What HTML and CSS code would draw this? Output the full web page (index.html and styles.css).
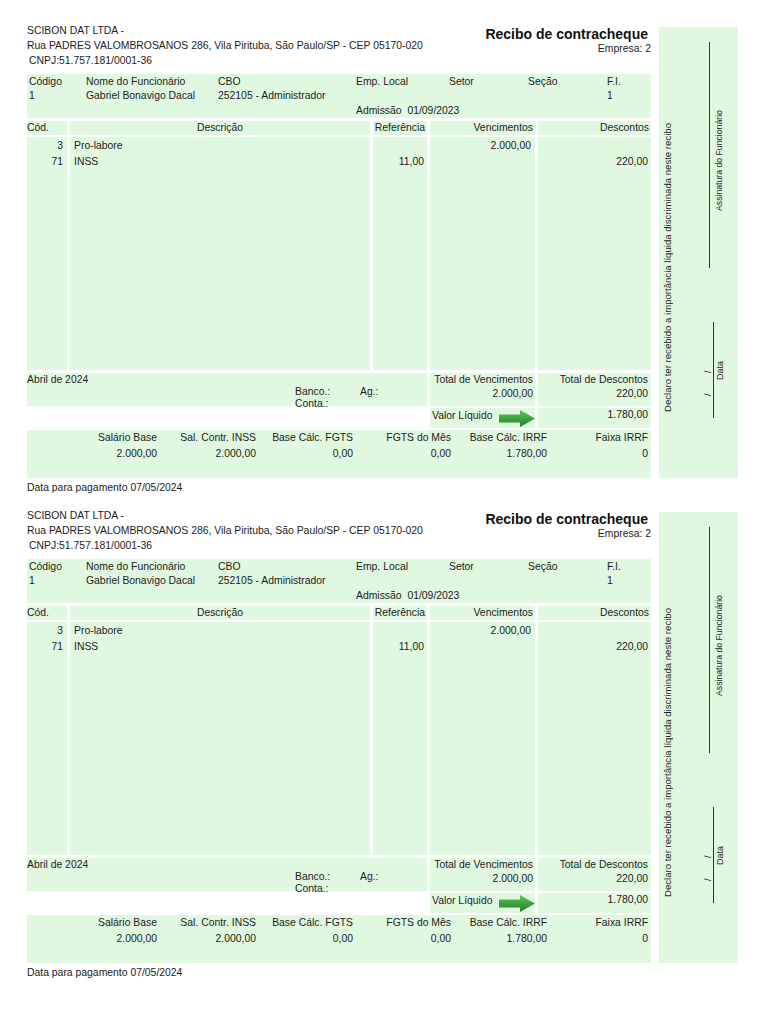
FILE: index.html
```html
<!DOCTYPE html>
<html lang="pt-BR">
<head>
<meta charset="utf-8">
<title>Recibo de contracheque</title>
<link rel="stylesheet" href="styles.css">
</head>
<body>
<div class="page">

  <section class="receipt">
    <div class="receipt-row">
      <div class="main">
        <div class="top">
          <div class="company">
            <div>SCIBON DAT LTDA -</div>
            <div>Rua PADRES VALOMBROSANOS 286, Vila Pirituba, São Paulo/SP - CEP 05170-020</div>
            <div class="cnpj">CNPJ:51.757.181/0001-36</div>
          </div>
          <div class="title-box">
            <div class="title">Recibo de contracheque</div>
            <div class="empresa">Empresa: 2</div>
          </div>
        </div>
        <div class="emp">
          <div class="emp-row">
            <span>Código</span><span>Nome do Funcionário</span><span>CBO</span><span>Emp. Local</span><span>Setor</span><span>Seção</span><span>F.I.</span>
          </div>
          <div class="emp-row">
            <span>1</span><span>Gabriel Bonavigo Dacal</span><span>252105 - Administrador</span><span></span><span></span><span></span><span>1</span>
          </div>
          <div class="emp-row adm">
            <span class="adm-cell">Admissão&nbsp;&nbsp;01/09/2023</span>
          </div>
        </div>
        <div class="items">
          <div class="th th-cod">Cód.</div>
          <div class="th th-desc">Descrição</div>
          <div class="th th-r">Referência</div>
          <div class="th th-r">Vencimentos</div>
          <div class="th th-r">Descontos</div>
          <div class="td td-cod"><div>3</div><div>71</div></div>
          <div class="td td-desc"><div>Pro-labore</div><div>INSS</div></div>
          <div class="td td-r"><div>&nbsp;</div><div>11,00</div></div>
          <div class="td td-venc"><div>2.000,00</div><div>&nbsp;</div></div>
          <div class="td td-r"><div>&nbsp;</div><div>220,00</div></div>
        </div>
        <div class="foot">
          <div class="f-left">
            <div>Abril de 2024</div>
            <div class="bank">
              <div><span class="bk">Banco.:</span><span>Ag.:</span></div>
              <div><span class="bk">Conta.:</span></div>
            </div>
          </div>
          <div class="f-tot f-venc"><div>Total de Vencimentos</div><div>2.000,00</div></div>
          <div class="f-tot f-desc"><div>Total de Descontos</div><div>220,00</div></div>
          <div class="f-blank"></div>
          <div class="f-liq">
            <span>Valor Líquido</span>
            <svg class="arrow" width="36" height="17" viewBox="0 0 36 17" aria-hidden="true">
              <defs>
                <linearGradient id="ag1" x1="0" y1="0" x2="0" y2="1">
                  <stop offset="0" stop-color="#62c454"/>
                  <stop offset="1" stop-color="#1f7f2b"/>
                </linearGradient>
              </defs>
              <path d="M0 4.5H21V0L36 8.5L21 17V12.5H0Z" fill="url(#ag1)"/>
            </svg>
          </div>
          <div class="f-liq-val">1.780,00</div>
        </div>
        <div class="bottom">
          <div class="b-row">
            <span>Salário Base</span><span>Sal. Contr. INSS</span><span>Base Cálc. FGTS</span><span>FGTS do Mês</span><span>Base Cálc. IRRF</span><span>Faixa IRRF</span>
          </div>
          <div class="b-row b-vals">
            <span>2.000,00</span><span>2.000,00</span><span>0,00</span><span>0,00</span><span>1.780,00</span><span>0</span>
          </div>
        </div>
      </div>
      <aside class="panel">
        <div class="decl-col">
          <div class="vt decl">Declaro ter recebido a importância líquida discriminada neste recibo</div>
        </div>
        <div class="sign-col">
          <div class="vt sig">Assinatura do Funcionário</div>
          <div class="vt date">
            <div class="date-line"><span class="sl s1">/</span><span class="sl s2">/</span></div>
            <div class="date-label">Data</div>
          </div>
        </div>
      </aside>
    </div>
    <div class="paydate">Data para pagamento 07/05/2024</div>
  </section>

  <section class="receipt">
    <div class="receipt-row">
      <div class="main">
        <div class="top">
          <div class="company">
            <div>SCIBON DAT LTDA -</div>
            <div>Rua PADRES VALOMBROSANOS 286, Vila Pirituba, São Paulo/SP - CEP 05170-020</div>
            <div class="cnpj">CNPJ:51.757.181/0001-36</div>
          </div>
          <div class="title-box">
            <div class="title">Recibo de contracheque</div>
            <div class="empresa">Empresa: 2</div>
          </div>
        </div>
        <div class="emp">
          <div class="emp-row">
            <span>Código</span><span>Nome do Funcionário</span><span>CBO</span><span>Emp. Local</span><span>Setor</span><span>Seção</span><span>F.I.</span>
          </div>
          <div class="emp-row">
            <span>1</span><span>Gabriel Bonavigo Dacal</span><span>252105 - Administrador</span><span></span><span></span><span></span><span>1</span>
          </div>
          <div class="emp-row adm">
            <span class="adm-cell">Admissão&nbsp;&nbsp;01/09/2023</span>
          </div>
        </div>
        <div class="items">
          <div class="th th-cod">Cód.</div>
          <div class="th th-desc">Descrição</div>
          <div class="th th-r">Referência</div>
          <div class="th th-r">Vencimentos</div>
          <div class="th th-r">Descontos</div>
          <div class="td td-cod"><div>3</div><div>71</div></div>
          <div class="td td-desc"><div>Pro-labore</div><div>INSS</div></div>
          <div class="td td-r"><div>&nbsp;</div><div>11,00</div></div>
          <div class="td td-venc"><div>2.000,00</div><div>&nbsp;</div></div>
          <div class="td td-r"><div>&nbsp;</div><div>220,00</div></div>
        </div>
        <div class="foot">
          <div class="f-left">
            <div>Abril de 2024</div>
            <div class="bank">
              <div><span class="bk">Banco.:</span><span>Ag.:</span></div>
              <div><span class="bk">Conta.:</span></div>
            </div>
          </div>
          <div class="f-tot f-venc"><div>Total de Vencimentos</div><div>2.000,00</div></div>
          <div class="f-tot f-desc"><div>Total de Descontos</div><div>220,00</div></div>
          <div class="f-blank"></div>
          <div class="f-liq">
            <span>Valor Líquido</span>
            <svg class="arrow" width="36" height="17" viewBox="0 0 36 17" aria-hidden="true">
              <defs>
                <linearGradient id="ag2" x1="0" y1="0" x2="0" y2="1">
                  <stop offset="0" stop-color="#62c454"/>
                  <stop offset="1" stop-color="#1f7f2b"/>
                </linearGradient>
              </defs>
              <path d="M0 4.5H21V0L36 8.5L21 17V12.5H0Z" fill="url(#ag2)"/>
            </svg>
          </div>
          <div class="f-liq-val">1.780,00</div>
        </div>
        <div class="bottom">
          <div class="b-row">
            <span>Salário Base</span><span>Sal. Contr. INSS</span><span>Base Cálc. FGTS</span><span>FGTS do Mês</span><span>Base Cálc. IRRF</span><span>Faixa IRRF</span>
          </div>
          <div class="b-row b-vals">
            <span>2.000,00</span><span>2.000,00</span><span>0,00</span><span>0,00</span><span>1.780,00</span><span>0</span>
          </div>
        </div>
      </div>
      <aside class="panel">
        <div class="decl-col">
          <div class="vt decl">Declaro ter recebido a importância líquida discriminada neste recibo</div>
        </div>
        <div class="sign-col">
          <div class="vt sig">Assinatura do Funcionário</div>
          <div class="vt date">
            <div class="date-line"><span class="sl s1">/</span><span class="sl s2">/</span></div>
            <div class="date-label">Data</div>
          </div>
        </div>
      </aside>
    </div>
    <div class="paydate">Data para pagamento 07/05/2024</div>
  </section>

</div>
</body>
</html>
```

FILE: styles.css
```css
* {
  box-sizing: border-box;
  margin: 0;
  padding: 0;
}

html,
body {
  background: #ffffff;
}

body {
  font-family: "Liberation Sans", Arial, sans-serif;
  font-size: 10.4px;
  line-height: 14px;
  color: #1c1c1c;
}

.page {
  padding: 22px 0 0 27px;
}

.receipt {
  margin-bottom: 12px;
}

.receipt-row {
  display: flex;
  align-items: stretch;
  gap: 8px;
}

.main {
  width: 624px;
  flex: none;
}

/* ---------- top header ---------- */
.top {
  display: flex;
  justify-content: space-between;
  height: 52px;
}

.company {
  line-height: 15px;
  padding-top: 1px;
}

.cnpj {
  padding-left: 2px;
}

.title-box {
  text-align: right;
}

.title {
  font-size: 14px;
  font-weight: bold;
  line-height: 16px;
  margin-top: 4px;
  padding-right: 3px;
  color: #111;
}

.empresa {
  line-height: 12px;
  padding-top: 1px;
}

/* ---------- employee block ---------- */
.emp {
  background: #e0f8e0;
  height: 44px;
  padding-top: 1px;
}

.emp-row {
  display: grid;
  grid-template-columns: 57px 132px 138px 93px 79px 79px 1fr;
  padding-left: 2px;
  line-height: 14px;
}

.adm {
  margin-top: 1px;
}

.adm-cell {
  grid-column: 4 / span 4;
}

/* ---------- items table ---------- */
.items {
  display: grid;
  grid-template-columns: 40px 300px 54px 105px 113px;
  grid-template-rows: 14px 233px;
  gap: 2px 3px;
  margin-top: 3px;
}

.th,
.td {
  background: #e0f8e0;
}

.th {
  line-height: 14px;
}

.th-desc {
  text-align: center;
}

.th-r {
  text-align: right;
  padding-right: 2px;
}

.td {
  line-height: 16px;
  padding-top: 1px;
}

.td-cod {
  text-align: right;
  padding-right: 4px;
}

.td-desc {
  padding-left: 4px;
}

.td-r {
  text-align: right;
  padding-right: 3px;
}

.td-venc {
  text-align: right;
  padding-right: 4px;
}

/* ---------- footer totals ---------- */
.foot {
  display: grid;
  grid-template-columns: 400px 105px 113px;
  grid-template-rows: 33px 20px;
  gap: 2px 3px;
  margin-top: 3px;
}

.f-left {
  background: #e0f8e0;
  line-height: 12px;
  padding-top: 1px;
}

.bank {
  padding-left: 268px;
}

.bk {
  display: inline-block;
  width: 65px;
}

.f-tot {
  background: #e0f8e0;
  text-align: right;
  line-height: 14px;
}

.f-venc {
  padding-right: 2px;
}

.f-desc {
  padding-right: 3px;
}

.f-blank {
  background: #ffffff;
}

.f-liq {
  background: #e0f8e0;
  display: flex;
  align-items: flex-start;
  justify-content: space-between;
  padding-left: 2px;
  padding-top: 1px;
  line-height: 14px;
}

.arrow {
  display: block;
  margin-top: 1px;
}

.f-liq-val {
  background: #e0f8e0;
  text-align: right;
  padding-right: 3px;
  line-height: 14px;
}

/* ---------- bottom bases ---------- */
.bottom {
  background: #e0f8e0;
  height: 48px;
  margin-top: 2px;
  padding-top: 1px;
}

.b-row {
  display: grid;
  grid-template-columns: 130px 99px 97px 98px 96px 101px;
  text-align: right;
  line-height: 14px;
}

.b-vals {
  margin-top: 2px;
}

.paydate {
  margin-top: 2px;
  padding-top: 1px;
  line-height: 14px;
}

/* ---------- side panel ---------- */
.panel {
  width: 79px;
  flex: none;
  margin-top: 5px;
  background: #e0f8e0;
  display: flex;
}

.vt {
  writing-mode: vertical-rl;
  transform: rotate(180deg);
  white-space: nowrap;
}

.decl-col {
  width: 41px;
  display: flex;
  flex-direction: column;
  justify-content: flex-end;
  align-items: flex-start;
  padding: 0 0 66px 3px;
}

.decl {
  font-size: 9.6px;
  line-height: 12px;
}

.sign-col {
  display: flex;
  flex-direction: column;
  align-items: flex-start;
  padding-top: 15px;
}

.sig {
  inline-size: 226px;
  margin-left: 9px;
  border-block-start: 1px solid #333;
  padding-block-start: 3px;
  padding-inline-end: 12px;
  text-align: center;
  font-size: 8.7px;
  line-height: 12px;
}

.date {
  inline-size: 96px;
  margin-top: 54px;
  margin-left: 3px;
  font-size: 9px;
}

.date-line {
  border-block-end: 1px solid #333;
  line-height: 10px;
  display: flex;
  padding-inline-start: 22px;
}

.sl {
  display: block;
}

.s2 {
  margin-inline-start: 20px;
}

.date-label {
  text-align: center;
  line-height: 12px;
}
```
